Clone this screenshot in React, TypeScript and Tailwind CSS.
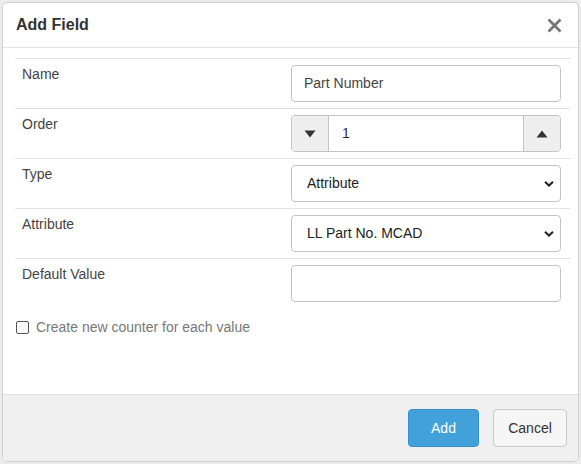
import { ReactNode } from "react";

// "Add Field" modal: header, a bordered form table, a checkbox and a grey footer.
const Chevron = () => (
  <svg viewBox="0 0 10 7" className="pointer-events-none absolute right-[6px] top-1/2 h-[7px] w-[10px] -translate-y-1/2">
    <path d="M1 1.2 L5 5 L9 1.2" fill="none" stroke="#222" strokeWidth="2" />
  </svg>
);

function Row({ label, children }: { label: string; children: ReactNode }) {
  return (
    <div className="flex h-[50px] border-t border-[#e3e3e3]">
      <div className="w-[276px] pl-[7px] pt-[5px] text-[14px] leading-[20px] text-[#444]">{label}</div>
      <div className="pt-[6px]">{children}</div>
    </div>
  );
}

function Select({ value }: { value: string }) {
  return (
    <div className="relative h-[37px] w-[270px] rounded-[4px] border border-[#c4c4c4] bg-white">
      <div className="pl-[15px] text-[14px] leading-[35px] text-[#222]">{value}</div>
      <Chevron />
    </div>
  );
}

export default function App() {
  return (
    <div className="min-h-[464px] bg-[#ececec] p-[2px] font-['Liberation_Sans',Arial,sans-serif]">
      <div className="flex h-[460px] flex-col overflow-hidden rounded-[5px] border border-[#cfcfcf] bg-white">
        {/* header */}
        <div className="flex h-[45px] shrink-0 items-center justify-between border-b border-[#e5e5e5] pl-[13px] pr-[16px]">
          <div className="text-[16px] font-bold text-[#333]">Add Field</div>
          <svg viewBox="0 0 15 15" className="h-[15px] w-[15px]">
            <path d="M1.5 1.5 L13.5 13.5 M13.5 1.5 L1.5 13.5" stroke="#757575" strokeWidth="2.7" strokeLinecap="butt" />
          </svg>
        </div>

        {/* body */}
        <div className="flex-1 px-[12px] pt-[10px]">
          <div className="w-[555px]">
            <Row label="Name">
              <div className="h-[37px] w-[270px] rounded-[4px] border border-[#c4c4c4] pl-[12px] text-[14px] leading-[35px] text-[#444]">
                Part Number
              </div>
            </Row>
            <Row label="Order">
              <div className="flex h-[37px] w-[270px] overflow-hidden rounded-[4px] border border-[#c4c4c4]">
                <div className="flex w-[37px] items-center justify-center border-r border-[#c4c4c4] bg-[#eeeeee]">
                  <svg viewBox="0 0 12 8" className="h-[8px] w-[12px]">
                    <path d="M0.5 0.5 H11.5 L6 7.5 Z" fill="#333" />
                  </svg>
                </div>
                <div className="flex-1 pl-[13px] text-[14px] leading-[35px] text-[#333]">1</div>
                <div className="flex w-[37px] items-center justify-center border-l border-[#c4c4c4] bg-[#eeeeee]">
                  <svg viewBox="0 0 12 8" className="h-[8px] w-[12px]">
                    <path d="M0.5 7.5 H11.5 L6 0.5 Z" fill="#333" />
                  </svg>
                </div>
              </div>
            </Row>
            <Row label="Type">
              <Select value="Attribute" />
            </Row>
            <Row label="Attribute">
              <Select value="LL Part No. MCAD" />
            </Row>
            <Row label="Default Value">
              <div className="h-[37px] w-[270px] rounded-[4px] border border-[#c4c4c4]" />
            </Row>
          </div>

          <label className="mt-[9px] flex items-center gap-[7px] pl-[1px]">
            <span className="h-[13px] w-[13px] rounded-[2px] border border-[#555] bg-white" />
            <span className="text-[14px] leading-[20px] text-[#777]">Create new counter for each value</span>
          </label>
        </div>

        {/* footer */}
        <div className="flex h-[67px] shrink-0 items-start justify-end gap-[14px] border-t border-[#e0e0e0] bg-[#f0f0f0] pr-[11px] pt-[14px]">
          <button className="h-[38px] w-[71px] rounded-[4px] border border-[#3592cf] bg-[#42a0db] text-[14px] text-white">
            Add
          </button>
          <button className="h-[38px] w-[74px] rounded-[4px] border border-[#c8c8c8] bg-[#f5f5f5] text-[14px] text-[#333]">
            Cancel
          </button>
        </div>
      </div>
    </div>
  );
}
